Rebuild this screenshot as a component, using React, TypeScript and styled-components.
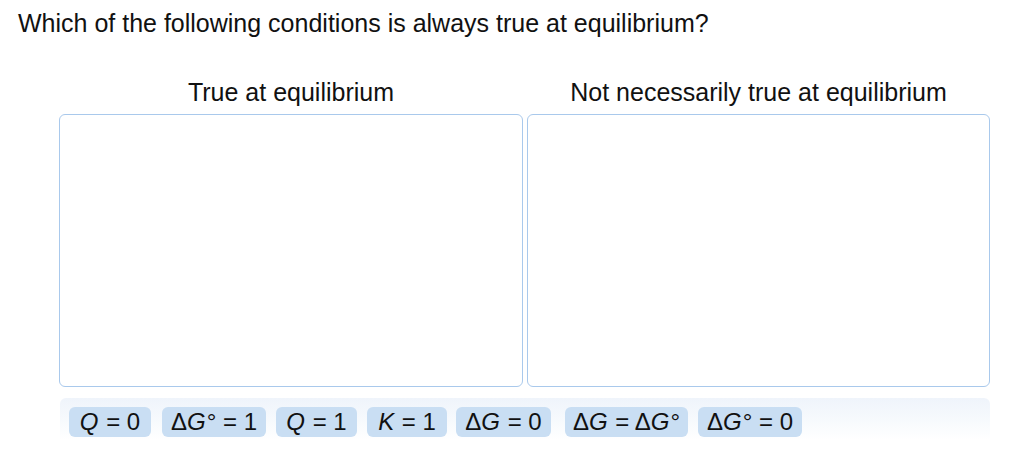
import React from "react";
import styled, { createGlobalStyle } from "styled-components";

const Global = createGlobalStyle`
  html, body { margin: 0; padding: 0; background: #ffffff; }
  body { font-family: "Liberation Sans", Arial, sans-serif; color: #111; }
`;

const Page = styled.div`
  width: 1024px;
  height: 459px;
  box-sizing: border-box;
  padding: 8px 0 0 0;
  overflow: hidden;
`;

const Question = styled.div`
  font-size: 25px;
  line-height: 30px;
  padding-left: 18px;
  margin-bottom: 41px;
`;

const Board = styled.div`
  margin-left: 59px;
  width: 931px;
`;

const Columns = styled.div`
  display: grid;
  grid-template-columns: 464px 463px;
  column-gap: 4px;
`;

const Column = styled.div`
  display: flex;
  flex-direction: column;
  align-items: stretch;
`;

const Heading = styled.div`
  text-align: center;
  font-size: 25px;
  line-height: 26px;
  height: 35px;
  white-space: nowrap;
`;

const DropZone = styled.div`
  height: 273px;
  box-sizing: border-box;
  border: 1.5px solid #a9c9ec;
  border-radius: 6px;
  background: #ffffff;
`;

const Tray = styled.div`
  margin-top: 11px;
  margin-left: 1px;
  height: 42px;
  box-sizing: border-box;
  padding: 9px 0 0 9px;
  border-radius: 6px 6px 0 0;
  background: linear-gradient(to bottom, #eff4fb 0%, #f7fafd 55%, #ffffff 100%);
  display: flex;
  align-items: flex-start;
`;

const Chip = styled.div<{ $w: number; $gap: number }>`
  width: ${(p) => p.$w}px;
  margin-left: ${(p) => p.$gap}px;
  flex: none;
  height: 30px;
  box-sizing: border-box;
  border-radius: 6px;
  background: #c9def3;
  display: flex;
  align-items: center;
  justify-content: center;
  font-size: 24px;
  line-height: 30px;
  white-space: pre;
  color: #111;
`;

const Var = styled.i`
  font-style: italic;
  padding-right: 1px;
`;

const chips: { w: number; gap: number; body: React.ReactNode }[] = [
  { w: 82, gap: 0, body: <><Var>Q</Var>{" = 0"}</> },
  { w: 104, gap: 11, body: <>Δ<Var>G</Var>{"° = 1"}</> },
  { w: 81, gap: 10, body: <><Var>Q</Var>{" = 1"}</> },
  { w: 80, gap: 10, body: <><Var>K</Var>{" = 1"}</> },
  { w: 95, gap: 9, body: <>Δ<Var>G</Var>{" = 0"}</> },
  { w: 123, gap: 14, body: <>Δ<Var>G</Var>{" = Δ"}<Var>G</Var>°</> },
  { w: 104, gap: 10, body: <>Δ<Var>G</Var>{"° = 0"}</> },
];

export default function App() {
  return (
    <>
      <Global />
      <Page>
        <Question>Which of the following conditions is always true at equilibrium?</Question>
        <Board>
          <Columns>
            <Column>
              <Heading>True at equilibrium</Heading>
              <DropZone />
            </Column>
            <Column>
              <Heading>Not necessarily true at equilibrium</Heading>
              <DropZone />
            </Column>
          </Columns>
          <Tray>
            {chips.map((c, i) => (
              <Chip key={i} $w={c.w} $gap={c.gap}>{c.body}</Chip>
            ))}
          </Tray>
        </Board>
      </Page>
    </>
  );
}
